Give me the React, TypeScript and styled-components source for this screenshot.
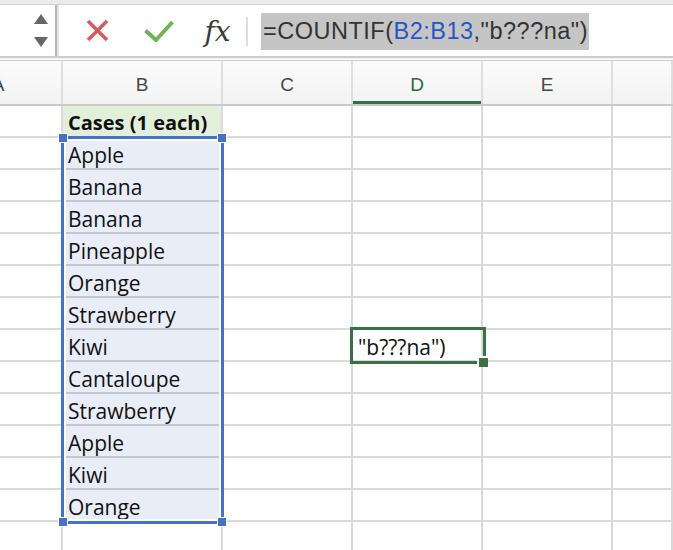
import React from 'react'
import styled, { createGlobalStyle } from 'styled-components'

const GlobalStyle = createGlobalStyle`
  html, body {
    margin: 0;
    padding: 0;
    background: #fff;
  }
  #root {
    width: 673px;
    height: 550px;
    overflow: hidden;
  }
`

const Window = styled.div`
  width: 673px;
  height: 550px;
  overflow: hidden;
  display: flex;
  flex-direction: column;
  background: #fff;
  font-family: 'Liberation Sans', Arial, sans-serif;
`

const TopStrip = styled.div`
  flex: none;
  height: 4px;
  background: #ececec;
  border-bottom: 1px solid #d4d4d4;
`

const Toolbar = styled.div`
  flex: none;
  display: flex;
  align-items: center;
  height: 51px;
  border-bottom: 2px solid #cbcbcb;
`

const NameBox = styled.div`
  align-self: stretch;
  box-sizing: border-box;
  width: 57px;
  padding-right: 7px;
  border-right: 2px solid #b8b8b8;
  box-shadow: 2px 0 0 #e3e3e3;
  display: flex;
  flex-direction: column;
  align-items: flex-end;
  justify-content: center;
  gap: 13px;
`

const Triangle = styled.span<{ $dir: 'up' | 'down' }>`
  width: 0;
  height: 0;
  border-left: 7px solid transparent;
  border-right: 7px solid transparent;
  ${(p) => (p.$dir === 'up' ? 'border-bottom: 10px solid #666;' : 'border-top: 10px solid #666;')}
`

const Actions = styled.div`
  display: flex;
  align-items: center;
  padding-left: 9px;
`

const ActionButton = styled.div<{ $shift?: number }>`
  width: 60px;
  height: 40px;
  display: flex;
  align-items: center;
  justify-content: center;
  padding-left: ${(p) => p.$shift ?? 0}px;
  box-sizing: border-box;
`

const Fx = styled.span`
  font-family: 'DejaVu Serif', 'Liberation Serif', serif;
  font-style: italic;
  font-size: 28px;
  color: #3a3a3a;
  margin-top: 1px;
`

const Separator = styled.div`
  width: 2px;
  height: 29px;
  margin-top: 2px;
  background: #dedede;
`

const Formula = styled.div`
  margin-left: 13px;
  margin-top: 2px;
  height: 37px;
  padding: 0 1px 0 2px;
  display: flex;
  align-items: center;
  background: #c5c5c5;
  color: #333;
  font-size: 23.5px;
  letter-spacing: 0.5px;
  white-space: nowrap;
`

const Ref = styled.span`
  color: #2757c6;
`

const Band = styled.div`
  flex: none;
  height: 2px;
  background: #f6f6f6;
`

const HeaderRow = styled.div`
  flex: none;
  display: flex;
  box-sizing: border-box;
  height: 46px;
  margin-left: -65px;
  border-top: 1px solid #d0d0d0;
  border-bottom: 2px solid #cacaca;
  background: linear-gradient(#fbfbfb, #f3f3f3);
`

const HeaderCell = styled.div<{ $w: number; $active?: boolean }>`
  box-sizing: border-box;
  ${(p) => (p.$w ? `width: ${p.$w}px; flex: none;` : 'flex: 1;')}
  border-right: 2px solid #dedede;
  display: flex;
  align-items: center;
  justify-content: center;
  padding-top: 4px;
  font-size: 19px;
  color: ${(p) => (p.$active ? '#2d6a39' : '#474747')};
  box-shadow: ${(p) => (p.$active ? 'inset 0 -3px 0 #33703f' : 'none')};
`

const Body = styled.div`
  position: relative;
  flex: 1;
  overflow: hidden;
`

const Row = styled.div`
  display: flex;
  height: 32px;
  margin-left: -65px;
`

const Cell = styled.div<{ $w: number; $tone?: 'head' | 'sel' }>`
  box-sizing: border-box;
  ${(p) => (p.$w ? `width: ${p.$w}px; flex: none;` : 'flex: 1;')}
  height: 32px;
  padding: 3px 0 0 5px;
  display: flex;
  align-items: center;
  border-right: 2px solid #dadada;
  border-bottom: 2px solid ${(p) => (p.$tone === 'sel' ? '#c3c7ce' : '#dadada')};
  background: ${(p) => (p.$tone === 'head' ? '#e2efda' : p.$tone === 'sel' ? '#e9edf7' : '#fff')};
  font-family: 'Open Sans', 'Liberation Sans', sans-serif;
  font-size: ${(p) => (p.$tone === 'head' ? 20 : 21)}px;
  font-weight: ${(p) => (p.$tone === 'head' ? 700 : 400)};
  color: #111;
  white-space: nowrap;
`

const Selection = styled.div`
  position: absolute;
  left: 61px;
  top: 30px;
  width: 163px;
  height: 388px;
  box-sizing: border-box;
  border: 3px solid #4472c4;
  box-shadow: inset 0 0 0 2px #fff;
  pointer-events: none;
`

const Handle = styled.span<{ $x: 'left' | 'right'; $y: 'top' | 'bottom' }>`
  position: absolute;
  ${(p) => p.$x}: -6px;
  ${(p) => p.$y}: -6px;
  width: 8px;
  height: 8px;
  background: #4472c4;
  border: 1px solid #fff;
`

const ActiveCell = styled.div`
  position: absolute;
  left: 350px;
  top: 221px;
  width: 136px;
  height: 37px;
  box-sizing: border-box;
  border: 3px solid #3a7045;
  pointer-events: none;
`

const FillHandle = styled.span`
  position: absolute;
  right: -5px;
  bottom: -6px;
  width: 9px;
  height: 9px;
  background: #3a7045;
  border-left: 2px solid #fff;
  border-top: 2px solid #fff;
`

const columns = [
  { key: 'A', w: 128 },
  { key: 'B', w: 160 },
  { key: 'C', w: 130 },
  { key: 'D', w: 130 },
  { key: 'E', w: 130 },
  { key: 'F', w: 0 },
]

const fruits = [
  'Apple',
  'Banana',
  'Banana',
  'Pineapple',
  'Orange',
  'Strawberry',
  'Kiwi',
  'Cantaloupe',
  'Strawberry',
  'Apple',
  'Kiwi',
  'Orange',
]

const rows: Record<string, string>[] = [
  { B: 'Cases (1 each)' },
  ...fruits.map((f, i) => (i === 6 ? { B: f, D: '"b???na")' } : { B: f })),
  {},
]

const CancelIcon = () => (
  <svg width="23" height="23" viewBox="0 0 23 23">
    <path d="M2 2 L21 21 M21 2 L2 21" stroke="#d75b5b" strokeWidth="3.6" fill="none" />
  </svg>
)

const CheckIcon = () => (
  <svg width="30" height="22" viewBox="0 0 30 22">
    <polyline points="1.5,10.5 12,20 28.5,2" stroke="#70b45a" strokeWidth="4" fill="none" />
  </svg>
)

export default function App() {
  return (
    <>
      <GlobalStyle />
      <Window>
        <TopStrip />
        <Toolbar>
          <NameBox>
            <Triangle $dir="up" />
            <Triangle $dir="down" />
          </NameBox>
          <Actions>
            <ActionButton $shift={2}>
              <CancelIcon />
            </ActionButton>
            <ActionButton $shift={5}>
              <CheckIcon />
            </ActionButton>
            <ActionButton $shift={3}>
              <Fx>fx</Fx>
            </ActionButton>
          </Actions>
          <Separator />
          <Formula>
            =COUNTIF(<Ref>B2:B13</Ref>,"b???na")
          </Formula>
        </Toolbar>
        <Band />
        <HeaderRow>
          {columns.map((c) => (
            <HeaderCell key={c.key} $w={c.w} $active={c.key === 'D'}>
              {c.key !== 'F' && c.key}
            </HeaderCell>
          ))}
        </HeaderRow>
        <Body>
          {rows.map((r, i) => (
            <Row key={i}>
              {columns.map((c) => {
                let tone: 'head' | 'sel' | undefined
                if (c.key === 'B' && i === 0) tone = 'head'
                else if (c.key === 'B' && i > 0 && i <= fruits.length) tone = 'sel'
                return (
                  <Cell key={c.key} $w={c.w} $tone={tone}>
                    {r[c.key]}
                  </Cell>
                )
              })}
            </Row>
          ))}
          <Selection>
            <Handle $x="left" $y="top" />
            <Handle $x="right" $y="top" />
            <Handle $x="left" $y="bottom" />
            <Handle $x="right" $y="bottom" />
          </Selection>
          <ActiveCell>
            <FillHandle />
          </ActiveCell>
        </Body>
      </Window>
    </>
  )
}
